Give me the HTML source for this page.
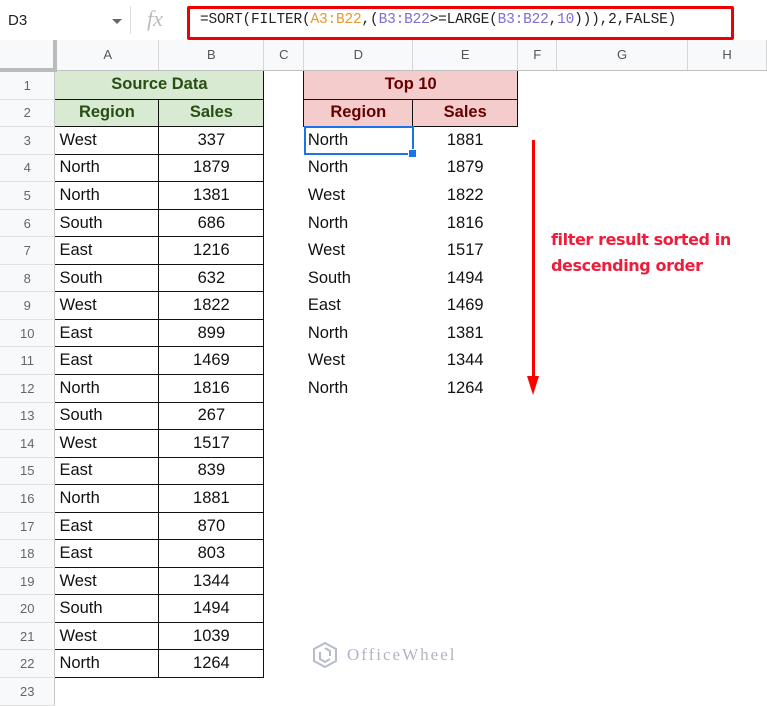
<!DOCTYPE html>
<html><head><meta charset="utf-8"><style>
body{margin:0;width:767px;height:694px;overflow:hidden;background:#fff;font-family:"Liberation Sans",Arial,sans-serif;position:relative}
.fb{position:absolute;left:0;top:0;width:767px;height:40px;border-bottom:1px solid #d0d0d0;background:#fff}
.nb{position:absolute;left:8px;top:12px;font-size:15px;color:#222}
.arr{position:absolute;left:112px;top:19px;width:0;height:0;border-left:5px solid transparent;border-right:5px solid transparent;border-top:5px solid #666}
.sep{position:absolute;left:130px;top:6px;width:1px;height:28px;background:#ddd}
.fx{position:absolute;left:147px;top:6px;font-family:"Liberation Serif",serif;font-style:italic;font-size:22px;color:#bbb}
.rb{position:absolute;left:187px;top:6px;width:541px;height:28px;border:3px solid #e00;border-radius:2px}
.ft{position:absolute;left:200px;top:12px;font-family:"Liberation Mono",monospace;font-size:14.5px;color:#222;letter-spacing:-0.2px}
.o{color:#e69a2e}.p{color:#7b6fd0}
table{position:absolute;left:0;top:40px;border-collapse:collapse;table-layout:fixed}
td{padding:0 4px;font-size:16.5px;color:#111;height:26.55px;white-space:nowrap;overflow:hidden}
tr.h td{background:#f8f9fa;color:#555;font-size:13px;text-align:center;height:28px;border-right:1px solid #d6d6d6;border-bottom:1px solid #c0c0c0}
td.r{background:#f8f9fa;color:#666;font-size:13px;text-align:center;border-right:1px solid #c8c8c8;border-bottom:1px solid #e2e2e2}
tr.h td.r{border-right:4px solid #bbb;border-bottom:4px solid #bbb}
.k{border:1px solid #111}
.g{background:#d9ead3;color:#274e13;font-weight:bold;text-align:center}
.pk{background:#f4cccc;color:#660000;font-weight:bold;text-align:center}
.c{text-align:center}
.sel{position:absolute;left:304px;top:126px;width:106px;height:25px;border:2px solid #1a73e8}
.hd{position:absolute;left:408px;top:149px;width:7px;height:7px;background:#1a73e8;border:1px solid #fff}
.line{position:absolute;left:532px;top:140px;width:3px;height:240px;background:#f00}
.ah{position:absolute;left:527px;top:376px;border-left:6.5px solid transparent;border-right:6.5px solid transparent;border-top:19px solid #f00}
.note{position:absolute;left:551px;top:227px;color:#ee1d3c;font-weight:bold;font-size:16px;line-height:26px;font-family:"DejaVu Sans","Liberation Sans",sans-serif;letter-spacing:-0.4px}
.logo{position:absolute;left:347px;top:645px;color:#b0b4c0;font-family:"Liberation Serif",serif;font-size:17px;letter-spacing:2px}
</style></head><body>
<div class="fb"><span class="nb">D3</span><div class="arr"></div><div class="sep"></div><span class="fx">fx</span>
<div class="rb"></div>
<div class="ft">=SORT(FILTER(<span class="o">A3:B22</span>,(<span class="p">B3:B22</span>&gt;=LARGE(<span class="p">B3:B22</span>,<span class="p">10</span>))),2,FALSE)</div></div>
<table>
<colgroup><col style="width:55px"><col style="width:104px"><col style="width:105px"><col style="width:40px"><col style="width:109px"><col style="width:105px"><col style="width:39px"><col style="width:131px"><col style="width:79px"></colgroup>
<tr class="h"><td class="r"></td><td>A</td><td>B</td><td>C</td><td>D</td><td>E</td><td>F</td><td>G</td><td>H</td></tr>
<tr><td class="r">1</td><td class="k g" colspan="2">Source Data</td><td></td><td class="k pk" colspan="2">Top 10</td><td></td><td></td><td></td></tr>
<tr><td class="r">2</td><td class="k g">Region</td><td class="k g">Sales</td><td></td><td class="k pk">Region</td><td class="k pk">Sales</td><td></td><td></td><td></td></tr>
<tr><td class="r">3</td><td class="k">West</td><td class="k c">337</td><td></td><td>North</td><td class="c">1881</td><td></td><td></td><td></td></tr>
<tr><td class="r">4</td><td class="k">North</td><td class="k c">1879</td><td></td><td>North</td><td class="c">1879</td><td></td><td></td><td></td></tr>
<tr><td class="r">5</td><td class="k">North</td><td class="k c">1381</td><td></td><td>West</td><td class="c">1822</td><td></td><td></td><td></td></tr>
<tr><td class="r">6</td><td class="k">South</td><td class="k c">686</td><td></td><td>North</td><td class="c">1816</td><td></td><td></td><td></td></tr>
<tr><td class="r">7</td><td class="k">East</td><td class="k c">1216</td><td></td><td>West</td><td class="c">1517</td><td></td><td></td><td></td></tr>
<tr><td class="r">8</td><td class="k">South</td><td class="k c">632</td><td></td><td>South</td><td class="c">1494</td><td></td><td></td><td></td></tr>
<tr><td class="r">9</td><td class="k">West</td><td class="k c">1822</td><td></td><td>East</td><td class="c">1469</td><td></td><td></td><td></td></tr>
<tr><td class="r">10</td><td class="k">East</td><td class="k c">899</td><td></td><td>North</td><td class="c">1381</td><td></td><td></td><td></td></tr>
<tr><td class="r">11</td><td class="k">East</td><td class="k c">1469</td><td></td><td>West</td><td class="c">1344</td><td></td><td></td><td></td></tr>
<tr><td class="r">12</td><td class="k">North</td><td class="k c">1816</td><td></td><td>North</td><td class="c">1264</td><td></td><td></td><td></td></tr>
<tr><td class="r">13</td><td class="k">South</td><td class="k c">267</td><td></td><td></td><td></td><td></td><td></td><td></td></tr>
<tr><td class="r">14</td><td class="k">West</td><td class="k c">1517</td><td></td><td></td><td></td><td></td><td></td><td></td></tr>
<tr><td class="r">15</td><td class="k">East</td><td class="k c">839</td><td></td><td></td><td></td><td></td><td></td><td></td></tr>
<tr><td class="r">16</td><td class="k">North</td><td class="k c">1881</td><td></td><td></td><td></td><td></td><td></td><td></td></tr>
<tr><td class="r">17</td><td class="k">East</td><td class="k c">870</td><td></td><td></td><td></td><td></td><td></td><td></td></tr>
<tr><td class="r">18</td><td class="k">East</td><td class="k c">803</td><td></td><td></td><td></td><td></td><td></td><td></td></tr>
<tr><td class="r">19</td><td class="k">West</td><td class="k c">1344</td><td></td><td></td><td></td><td></td><td></td><td></td></tr>
<tr><td class="r">20</td><td class="k">South</td><td class="k c">1494</td><td></td><td></td><td></td><td></td><td></td><td></td></tr>
<tr><td class="r">21</td><td class="k">West</td><td class="k c">1039</td><td></td><td></td><td></td><td></td><td></td><td></td></tr>
<tr><td class="r">22</td><td class="k">North</td><td class="k c">1264</td><td></td><td></td><td></td><td></td><td></td><td></td></tr>
<tr><td class="r">23</td><td></td><td></td><td></td><td></td><td></td><td></td><td></td><td></td></tr>
</table>
<div class="sel"></div><div class="hd"></div>
<div class="line"></div><div class="ah"></div>
<div class="note">filter result sorted in<br>descending order</div>
<svg style="position:absolute;left:313px;top:642px" width="24" height="26" viewBox="0 0 24 26"><path d="M12 1 L23 7 L23 19 L12 25 L1 19 L1 7 Z" fill="none" stroke="#b8bcc8" stroke-width="2"/><path d="M7 10 L7 17 L12 20 L17 17 M12 6 L17 9 L17 14" fill="none" stroke="#b8bcc8" stroke-width="2"/></svg>
<div class="logo">OfficeWheel</div>
</body></html>
